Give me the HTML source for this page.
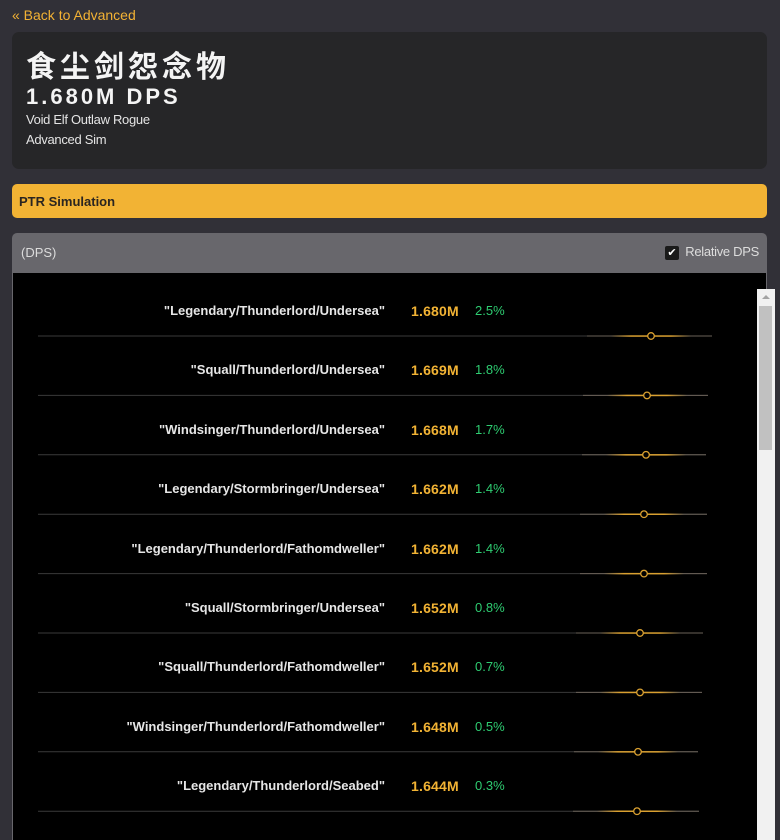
<!DOCTYPE html>
<html><head><meta charset="utf-8"><style>
*{margin:0;padding:0;box-sizing:border-box}
html,body{width:780px;height:840px;overflow:hidden}
body{background:#313037;font-family:"Liberation Sans","Noto Sans CJK SC",sans-serif;position:relative}
.back{position:absolute;left:12px;top:7px;color:#f3b234;font-size:14px}
.card{position:absolute;left:12px;top:32px;width:755px;height:137px;background:#262628;border-radius:7px}
.t1{position:absolute;left:14px;top:14px;color:#f4f4f4;font-size:30px;font-weight:bold;letter-spacing:4px;font-family:"Noto Sans CJK SC",sans-serif;line-height:36px}
.t2{position:absolute;left:14px;top:53px;color:#f4f4f4;font-size:22px;font-weight:bold;letter-spacing:3px;line-height:24px}
.t3{position:absolute;left:14px;font-size:13px;color:#e4e4e4;letter-spacing:-0.3px}
.ptr{position:absolute;left:12px;top:184px;width:755px;height:34px;background:#f2b334;border-radius:5px;color:#2a2520;font-weight:bold;font-size:13px;line-height:35px;padding-left:7px}
.panel{position:absolute;left:12px;top:233px;width:755px;height:607px;background:#68676c;border-radius:5px 5px 0 0}
.ph{position:absolute;left:9px;top:12px;color:#dcdcdc;font-size:13px}
.rel{position:absolute;right:8px;top:11px;color:#ddd;font-size:13px;letter-spacing:-0.3px}
.cb{position:absolute;right:88px;top:13px;width:14px;height:14px;background:#1a1a1a;border-radius:2px;color:#fff;font-size:11px;line-height:14px;text-align:center}
.chart{position:absolute;left:13px;top:273px;width:753px;height:567px;background:#000}
.sb{position:absolute;left:757px;top:289px;width:18px;height:551px;background:#f1f1f1}
.thumb{position:absolute;left:2px;top:17px;width:13px;height:144px;background:#c1c1c1}
.arr{position:absolute;left:5px;top:6px;width:0;height:0;border-left:4px solid transparent;border-right:4px solid transparent;border-bottom:4px solid #a3a3a3}
.row{position:absolute;font-size:13px;font-weight:bold;line-height:16px}
.lab{position:absolute;right:395px;width:400px;text-align:right;color:#e6e6e6}
.val{position:absolute;left:411px;color:#f2b334;font-size:14px;letter-spacing:0.2px}
.pct{position:absolute;left:475px;color:#2ecc71;font-weight:normal}
</style></head><body>
<div class="back">« Back to Advanced</div>
<div class="card">
<div class="t1">食尘剑怨念物</div>
<div class="t2">1.680M DPS</div>
<div class="t3" style="top:80px">Void Elf Outlaw Rogue</div>
<div class="t3" style="top:100px">Advanced Sim</div>
</div>
<div class="ptr">PTR Simulation</div>
<div class="panel"><div class="ph">(DPS)</div><div class="cb">✔</div><div class="rel">Relative DPS</div></div>
<div class="chart"></div>
<svg width="780" height="840" style="position:absolute;left:0;top:0">
<defs>
<linearGradient id="g" x1="0" x2="1"><stop offset="0" stop-color="#d9a030" stop-opacity="0"/><stop offset="0.25" stop-color="#d9a030"/><stop offset="0.75" stop-color="#d9a030"/><stop offset="1" stop-color="#d9a030" stop-opacity="0"/></linearGradient>
</defs>
<g id="lines"></g>
</svg>
<div id="rows"></div>
<div class="sb"><div class="arr"></div><div class="thumb"></div></div>
<script>
var d=[["\"Legendary/Thunderlord/Undersea\"","1.680M","2.5%",651,712],
["\"Squall/Thunderlord/Undersea\"","1.669M","1.8%",647,708],
["\"Windsinger/Thunderlord/Undersea\"","1.668M","1.7%",646,706],
["\"Legendary/Stormbringer/Undersea\"","1.662M","1.4%",644,707],
["\"Legendary/Thunderlord/Fathomdweller\"","1.662M","1.4%",644,707],
["\"Squall/Stormbringer/Undersea\"","1.652M","0.8%",640,703],
["\"Squall/Thunderlord/Fathomdweller\"","1.652M","0.7%",640,702],
["\"Windsinger/Thunderlord/Fathomdweller\"","1.648M","0.5%",638,698],
["\"Legendary/Thunderlord/Seabed\"","1.644M","0.3%",637,699]];
var h="",s="";
d.forEach(function(r,i){var y=303+i*59.4,ly=336+i*59.4;
h+='<div class="row" style="left:0;top:'+y+'px;width:780px"><span class="lab">'+r[0]+'</span><span class="val">'+r[1]+'</span><span class="pct">'+r[2]+'</span></div>';
s+='<line x1="38" x2="'+r[4]+'" y1="'+ly+'" y2="'+ly+'" stroke="#3a3a3a" stroke-width="1"/>';
s+='<line x1="'+(r[3]-64)+'" x2="'+(r[4])+'" y1="'+ly+'" y2="'+ly+'" stroke="#6a6258" stroke-width="1"/>';
s+='<rect x="'+(r[3]-40)+'" y="'+(ly-0.7)+'" width="80" height="1.5" fill="url(#g)"/>';
s+='<circle cx="'+r[3]+'" cy="'+ly+'" r="3.3" fill="#000" stroke="#d9a030" stroke-width="1.3"/>';});
document.getElementById("rows").innerHTML=h;document.getElementById("lines").innerHTML=s;
</script>
</body></html>
